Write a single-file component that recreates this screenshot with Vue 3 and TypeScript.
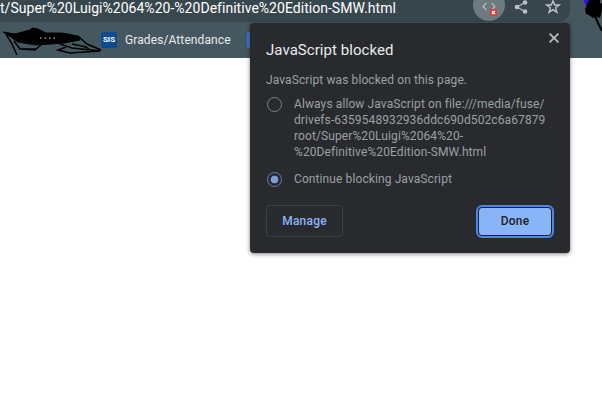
<script setup lang="ts">
const options = [
  {
    id: 'allow',
    lines: [
      'Always allow JavaScript on file:///media/fuse/',
      'drivefs-6359548932936ddc690d502c6a67879',
      'root/Super%20Luigi%2064%20-',
      '%20Definitive%20Edition-SMW.html',
    ],
    checked: false,
  },
  { id: 'block', lines: ['Continue blocking JavaScript'], checked: true },
]
</script>

<template>
  <div class="page">
    <header class="chrome">
      <div class="toolbar">
        <div class="omnibox">
          <span class="url">t/Super%20Luigi%2064%20-%20Definitive%20Edition-SMW.html</span>
          <span class="code-btn">
            <svg class="code-icon" width="14" height="9" viewBox="0 0 14 9" fill="none" stroke="#bdc1c6" stroke-width="1.1">
              <path d="M4.500 .8 1 4.500l3.500 3.700M9.500 .8 13 4.500l-3.500 3.700" />
            </svg>
            <span class="blocked-badge">
              <svg width="7" height="7" viewBox="0 0 7 7" stroke="#fff" stroke-width="1.200">
                <path d="M2 2l3 3M5 2 2 5" />
              </svg>
            </span>
          </span>
          <svg class="share" width="14" height="14" viewBox="0 0 14 14" fill="#bdc1c6">
            <circle cx="11" cy="2.500" r="2.300" />
            <circle cx="3" cy="7" r="2.300" />
            <circle cx="11" cy="11.500" r="2.300" />
            <path d="M3 7l8-4.500M3 7l8 4.500" stroke="#bdc1c6" stroke-width="1.200" />
          </svg>
          <svg class="star" width="16" height="16" viewBox="0 0 16 16" fill="none" stroke="#bdc1c6" stroke-width="1.400">
            <path d="M8 1.800 9.700 6h4.500l-3.600 2.800 1.300 4.500L8 10.700l-3.900 2.600 1.300-4.500L1.800 6h4.500z" />
          </svg>
        </div>
      </div>
      <div class="bookmarks">
        <svg class="scribble" width="110" height="36" viewBox="0 0 110 36" fill="none" stroke="#000" stroke-width="1.500">
          <path fill="#000" stroke-width="1" d="M3 10 15 12 30 8 32 6 38 7 46 11 62 11 78 14 80 18 64 21 50 22 36 23 18 20 15 18 8 13z" />
          <path d="M6 12 12 22 17 33M14 19 20 27 36 27 42 22M20 27 36 28M60 22 72 26 100 29 70 31 58 28 66 25M72 22 86 25 90 28M78 14 87 22 101 28" />
          <path stroke="#dfe3e5" stroke-width="1" stroke-dasharray="1.500 3" d="M40 16H56" />
        </svg>
        <span class="sis">SIS</span>
        <span class="bm-label">Grades/Attendance</span>
        <span class="bm-next"></span>
      </div>
    </header>

    <svg class="corner-scribble" width="18" height="32" viewBox="0 0 18 32">
      <path d="M0 0h6v6H2zM15 3h3v6h-3z" fill="#2a10e0" />
      <path d="M5 0h11v3l2 1v6l-2 8-3-1-4 1-4-3-3-1-1-5 2-4z" fill="#000" />
      <path d="M11 16l3 7 4 8" fill="none" stroke="#000" stroke-width="2" />
    </svg>

    <section class="bubble">
      <button class="close" aria-label="Close">
        <svg width="10" height="10" viewBox="0 0 10 10" stroke="#bdc1c6" stroke-width="1.700">
          <path d="M.6.6l8.800 8.800M9.400.6.6 9.400" />
        </svg>
      </button>
      <h2>JavaScript blocked</h2>
      <p class="message">JavaScript was blocked on this page.</p>
      <div class="options">
        <div v-for="opt in options" :key="opt.id" class="option">
          <span class="radio" :class="{ checked: opt.checked }"></span>
          <div class="option-text">
            <div v-for="line in opt.lines" :key="line">{{ line }}</div>
          </div>
        </div>
      </div>
      <div class="buttons">
        <button class="manage">Manage</button>
        <button class="done">Done</button>
      </div>
    </section>
  </div>
</template>

<style scoped>
.page {
  position: relative;
  width: 602px;
  height: 412px;
  overflow: hidden;
  background: #fff;
  font-family: Roboto, "Liberation Sans", sans-serif;
}

.chrome {
  background: #46585f;
  height: 58px;
}

.toolbar {
  height: 22px;
  padding-right: 32px;
}

.omnibox {
  display: flex;
  align-items: flex-start;
  height: 22px;
  overflow: hidden;
  background: #38474e;
  border-radius: 0 0 12px 0;
}

.url {
  flex: 1;
  margin-top: -2px;
  font-size: 14px;
  line-height: 20px;
  letter-spacing: 0.03px;
  color: #fff;
  white-space: nowrap;
}

.code-btn {
  position: relative;
  flex: none;
  width: 32px;
  height: 32px;
  margin-top: -11px;
  background: #6d7a80;
  border-radius: 50%;
}

.code-icon {
  position: absolute;
  left: 9px;
  top: 13px;
}

.blocked-badge {
  position: absolute;
  left: 17px;
  top: 20px;
  width: 7px;
  height: 7px;
  background: #e53935;
  line-height: 0;
}

.share {
  flex: none;
  margin: 0 0 0 9px;
}

.star {
  flex: none;
  margin: -1px 9px 0 17px;
}

.bookmarks {
  height: 36px;
  display: flex;
  align-items: center;
}

.scribble {
  flex: none;
  margin-right: -9px;
}

.corner-scribble {
  position: absolute;
  left: 584px;
  top: 0;
}

.sis {
  flex: none;
  width: 16px;
  height: 16px;
  border-radius: 2px;
  background: #0d4a8f;
  color: #fff;
  font-size: 8px;
  font-weight: 700;
  line-height: 16px;
  text-align: center;
}

.bm-label {
  margin-left: 8px;
  font-size: 12px;
  letter-spacing: 0.1px;
  color: #e8eaed;
  white-space: nowrap;
}

.bm-next {
  flex: none;
  width: 6px;
  height: 16px;
  margin-left: 16px;
  background: #3b78e7;
  border-radius: 2px 0 0 2px;
}

.bubble {
  position: absolute;
  left: 250px;
  top: 23px;
  width: 320px;
  height: 230px;
  box-sizing: border-box;
  padding: 18px 16px 0;
  background: #292a2d;
  border-radius: 4px;
  box-shadow: 0 1px 4px rgba(0, 0, 0, 0.5);
}

.close {
  position: absolute;
  top: 10px;
  right: 11px;
  padding: 0;
  border: 0;
  background: none;
  line-height: 0;
}

h2 {
  margin: 0;
  font-size: 15px;
  font-weight: 400;
  line-height: 18px;
  letter-spacing: 0.05px;
  color: #e8eaed;
}

.message {
  margin: 13px 0 0;
  font-size: 12px;
  line-height: 16px;
  letter-spacing: 0.1px;
  color: #9aa0a6;
}

.options {
  margin-top: 8px;
}

.option {
  display: flex;
  gap: 12px;
  margin-bottom: 11px;
  font-size: 12px;
  line-height: 16px;
  letter-spacing: 0.1px;
  color: #9aa0a6;
}

.radio {
  flex: none;
  box-sizing: border-box;
  width: 15px;
  height: 15px;
  margin: 1px 0 0 1px;
  border: 1.500px solid #7b8085;
  border-radius: 50%;
}

.radio.checked {
  border-color: #5f80b5;
  background: radial-gradient(circle, #7b9ed8 0 3.500px, transparent 4.200px);
}

.option-text {
  white-space: nowrap;
}

.buttons {
  display: flex;
  justify-content: space-between;
  align-items: center;
  margin-top: 18px;
}

button {
  font-family: inherit;
}

.manage,
.done {
  font-size: 12px;
  font-weight: 500;
  letter-spacing: 0.2px;
  border-radius: 4px;
}

.manage {
  width: 77px;
  height: 32px;
  background: none;
  border: 1px solid #3c4043;
  color: #8ab4f8;
}

.done {
  width: 74px;
  height: 29px;
  margin-right: 2px;
  background: #8ab4f8;
  border: 1px solid #202124;
  outline: 2px solid #4a86ec;
  color: #202124;
}
</style>
